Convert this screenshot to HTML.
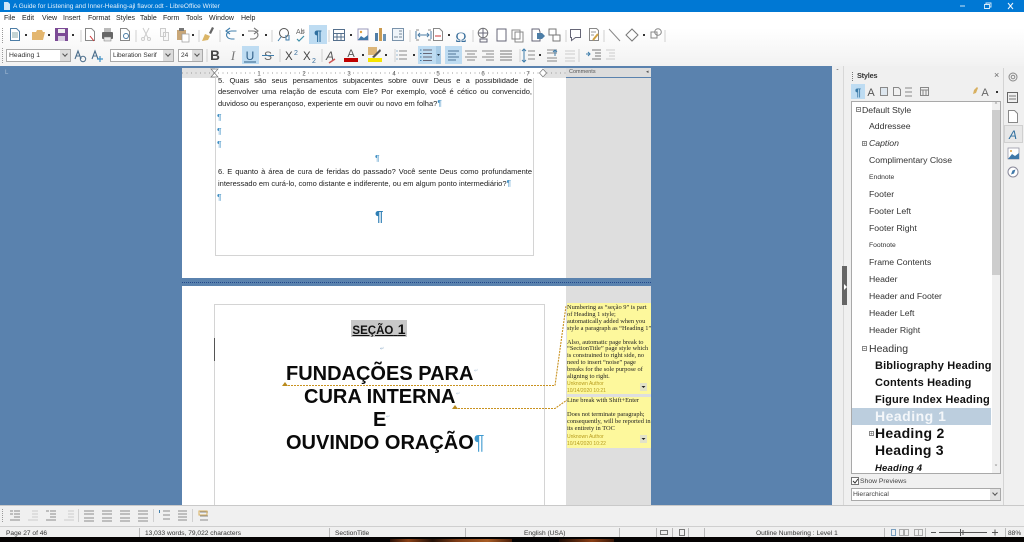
<!DOCTYPE html>
<html><head><meta charset="utf-8"><title>LibreOffice Writer</title>
<style>
html,body{margin:0;padding:0;background:#000}
#r{position:relative;width:1024px;height:542px;overflow:hidden;font-family:"Liberation Sans",sans-serif;background:#f0f0f0;color:#222}
.a{position:absolute}
.t{position:absolute;white-space:nowrap}
.m{font-size:7px;top:15px;color:#222;line-height:8px}
.j{position:absolute;left:218px;width:314px;font-size:7.5px;color:#222;text-align:justify;text-align-last:justify;white-space:nowrap;line-height:11px}
.p{position:absolute;font-size:8.6px;color:#3f8fc4;line-height:11px}
.c{position:absolute;left:567px;width:84px;font:6.4px/6.9px "Liberation Serif",serif;color:#222;white-space:nowrap}
.s{position:absolute;left:869px;font-size:8.7px;color:#333;white-space:nowrap;line-height:12px}
.b{position:absolute;left:875px;font-weight:bold;color:#111;white-space:nowrap}
.st{position:absolute;top:529px;font-size:6.6px;color:#333;white-space:nowrap;line-height:9px}
.sep{position:absolute;top:528px;width:1px;height:9px;background:#b9b9b9}
.cb{position:absolute;background:#fff;border:1px solid #a9a9a9;box-sizing:border-box;height:13px;font-size:6.5px;line-height:11px;padding-left:2px;color:#333;white-space:nowrap}
.ar{position:absolute;top:0;right:0;width:10px;height:11px;background:#dcdcdc}
.ar::after{content:"";position:absolute;left:3px;top:2px;width:3px;height:3px;border-right:1px solid #555;border-bottom:1px solid #555;transform:rotate(45deg)}
</style></head><body><div id="r">

<div class="a" style="left:0;top:0;width:1024px;height:12px;background:#0078d4"></div>
<div class="t" style="left:13px;top:2px;font-size:6.5px;color:#e4f1fb;line-height:9px">A Guide for Listening and Inner-Healing-ajl flavor.odt - LibreOffice Writer</div>
<svg class="a" style="left:0;top:0" width="1024" height="12">
<path d="M4 2h4l2 2v6H4z" fill="#cfe5f7"/>
<path d="M960 6h5" stroke="#cde4f6" stroke-width="1"/>
<path d="M984.500 4.500h5v4h-5zM986 4V3h5v4h-1" fill="none" stroke="#dbecf9" stroke-width=".9"/>
<path d="M1008 3l5 6M1013 3l-5 6" stroke="#f0f7fc" stroke-width="1"/>
</svg>

<div class="a" style="left:0;top:12px;width:1024px;height:54px;background:linear-gradient(#fff 0,#fff 30%,#f2f2f2 100%)"></div>
<div class="t m" style="left:4px">File</div>
<div class="t m" style="left:22px">Edit</div>
<div class="t m" style="left:42px">View</div>
<div class="t m" style="left:63px">Insert</div>
<div class="t m" style="left:88px">Format</div>
<div class="t m" style="left:116px">Styles</div>
<div class="t m" style="left:140px">Table</div>
<div class="t m" style="left:163px">Form</div>
<div class="t m" style="left:186px">Tools</div>
<div class="t m" style="left:209px">Window</div>
<div class="t m" style="left:241px">Help</div>

<div class="a" style="left:309px;top:25px;width:18px;height:19px;background:#bedcf2"></div>
<div class="a" style="left:242px;top:46px;width:17px;height:18px;background:#bedcf2"></div>
<div class="a" style="left:418px;top:46px;width:23px;height:18px;background:#bedcf2"></div>
<div class="a" style="left:445px;top:46px;width:17px;height:18px;background:#bedcf2"></div>
<div class="a" style="left:436px;top:46px;width:5px;height:18px;background:#a7cbe6"></div>

<!-- row 1 -->
<svg class="a" style="left:0;top:24px" width="1024" height="22" font-family="Liberation Sans">
<g fill="none" stroke="#777" stroke-width="1">
<path d="M2.500 4v15" stroke="#999" stroke-dasharray="1 1"/>
<path d="M10.500 4.500h6l3 3v9h-9z" stroke="#4c7da6" fill="#fff"/><path d="M12 9h6M12 11h6M12 13h6" stroke="#8aa"/>
<path d="M85.500 4.500h6l3 3v9h-9z" stroke="#888" fill="#fff"/><path d="M90 12l4 5" stroke="#c33"/>
<path d="M120.500 4.500h6l3 3v9h-9z" stroke="#888" fill="#fff"/><circle cx="126" cy="12" r="2.500" stroke="#4c7da6"/>
<path d="M143 4l5 10M149 4l-5 10" stroke="#ccc"/><circle cx="143" cy="15" r="1.500" stroke="#ccc"/><circle cx="149" cy="15" r="1.500" stroke="#ccc"/>
<path d="M160.500 4.500h5v8h-5zM163.500 8.500h5v8h-5z" stroke="#ccc" fill="#f8f8f8"/>
<path d="M234.500 15h-3c-3 0-5-2-5-4s2-4 5-4h5M230 4l-4 3 4 3" stroke="#3f7dab" stroke-width="1.100"/>
<path d="M250 15h3c3 0 5-2 5-4s-2-4-5-4h-5M254 4l4 3-4 3" stroke="#777" stroke-width="1.100"/>
<circle cx="284" cy="9" r="4.500" stroke="#555"/><path d="M281 13l-3 4M286 11v5h3v-5" stroke="#3f7dab"/>
<path d="M297 15l2 2 5-5" stroke="#3f8fa8" stroke-width="1.200"/>
<path d="M333.500 5.500h11v11h-11zM333.500 9.500h11M333.500 13h11M337 9.500v7M341 9.500v7" stroke="#546f8c"/>
<rect x="358" y="5" width="10" height="11" stroke="#99b" fill="#fff"/>
<rect x="392.500" y="4.500" width="11" height="12" stroke="#7a93ab" fill="#eef4f9"/><path d="M399 7h3M399 10h3M399 13h3M394 13h4" stroke="#789"/>
<path d="M416 7v8M431 7v8M418 11h11M420 9l-2 2 2 2M427 9l2 2-2 2" stroke="#4c7da6"/><path d="M416 6h3M428 6h3M416 16h3M428 16h3" stroke="#888"/>
<path d="M433.500 4.500h6l3 3v9h-9z" stroke="#888" fill="#fff"/><path d="M435 12h6" stroke="#c33"/>
<circle cx="483" cy="9" r="4.800" stroke="#777"/><path d="M478 9h10M483 4v10M480 15h7v3h-7z" stroke="#667"/>
<path d="M497 5h9v12h-9z" stroke="#667" fill="#fff"/><path d="M512 6h8v9h-8zM515 8h8v10h-8z" stroke="#888" fill="#fff"/>
<path d="M532 5h7l1 3v9h-8z" stroke="#667" fill="#fff"/><path d="M537 9h5l3 3-3 3h-5z" fill="#4c7da6" stroke="none"/>
<path d="M549 5h7v6h-7zM553 11h7v6h-7z" stroke="#777" fill="#fff"/>
<path d="M570.500 5.500h10v8h-5l-4 3v-3h-1z" stroke="#667" fill="#fff"/>
<path d="M589.500 4.500h7l2 2v10h-9z" stroke="#888" fill="#fff"/><path d="M591 8h5M591 11h3" stroke="#999"/><path d="M593 16l5-6" stroke="#d0a040" stroke-width="2"/>
<path d="M609 5l11 12" stroke="#888"/>
<path d="M632 5l6 6-6 6-6-6z" stroke="#777"/>
<path d="M651 8h6v6h-6z" stroke="#888"/><circle cx="658" cy="8" r="3.300" stroke="#888"/>
<path d="M81 6v12M136 6v12M199 6v12M220 6v12M272 6v12M329 6v12M410 6v12M473 6v12M566 6v12M604 6v12M665 6v12" stroke="#d0d0d0"/>
</g>
<path d="M55 4h13v13H55z" fill="#7b4a95"/><rect x="58" y="5" width="7" height="4" fill="#eee"/><rect x="58" y="12" width="7" height="5" fill="#d7cce0"/>
<path d="M32 8h4l1-2h5l1 2h2l-2 8H32z" fill="#e3b66f"/>
<rect x="102" y="8" width="11" height="7" fill="#666" rx="1"/><rect x="104" y="4" width="7" height="4" fill="#bbb"/><rect x="104" y="13" width="7" height="4" fill="#e6e6e6" stroke="#777" stroke-width=".5"/>
<rect x="177" y="6" width="9" height="10" fill="#c9a778"/><rect x="179" y="4" width="5" height="3" fill="#777"/><rect x="182" y="10" width="7" height="8" fill="#fff" stroke="#999" stroke-width=".7"/>
<path d="M212 3l2 1-3 6-2-1z" fill="#666"/><path d="M205 10l5 2-2 4-6 1z" fill="#dbb566"/>
<g fill="#333"><rect x="25" y="10" width="2" height="2"/><rect x="48" y="10" width="2" height="2"/><rect x="72" y="10" width="2" height="2"/><rect x="192" y="10" width="2" height="2"/><rect x="242" y="10" width="2" height="2"/><rect x="265" y="10" width="2" height="2"/><rect x="350" y="10" width="2" height="2"/><rect x="448" y="10" width="2" height="2"/><rect x="643" y="10" width="2" height="2"/></g>
<path d="M358 16l3-4 3 2 4-3v5z" fill="#3f78a8"/><circle cx="361" cy="8" r="1.200" fill="#e0a040"/>
<rect x="375" y="9" width="3" height="8" fill="#4f7da6"/><rect x="379" y="4" width="3" height="13" fill="#c99a50"/><rect x="383" y="10" width="3" height="7" fill="#6c93b5"/>
<text x="461" y="18" font-size="15" text-anchor="middle" fill="#3a6f9c" font-family="Liberation Serif">Ω</text>
<text x="296" y="10" font-size="7" fill="#666">Ab</text><text x="302" y="9" font-size="6" fill="#888">c</text>
<text x="318" y="16" font-size="14" font-weight="bold" text-anchor="middle" fill="#2f6f9f">¶</text>
</svg>

<!-- row 2 -->
<svg class="a" style="left:0;top:22px" width="1024" height="44" font-family="Liberation Sans">
<g fill="none" stroke="#777" stroke-width="1">
<path d="M2.500 26v15" stroke="#999" stroke-dasharray="1 1"/>
<path d="M207 27v13M280 27v13M322 27v13M395 27v13M520 27v13M579 27v13" stroke="#d0d0d0"/>
<path d="M75 37l3-8 3 8M76 34h4" stroke="#4b6d8b" stroke-width="1.100"/><circle cx="83" cy="37" r="2.700" stroke="#4b6d8b"/>
<path d="M92 37l3-8 3 8M93 34h4" stroke="#4b6d8b" stroke-width="1.100"/><path d="M97 37h6M100 34v6" stroke="#3f8fc4" stroke-width="1.200"/>
<g transform="translate(0,-2)">
<path d="M399 31h8M399 35h8M399 39h8" stroke="#888"/><path d="M396.500 31h1M396.500 35h1M396.500 39h1" stroke="#3f7dab"/>
<path d="M423 30h9M423 33.500h9M423 37h9M423 40.500h9" stroke="#667"/><path d="M420 30h1.500M420 33.500h1.500M420 37h1.500M420 40.500h1.500" stroke="#3f7dab"/>
<path d="M448 31h11M448 34h8M448 37h11M448 40h8" stroke="#4d7597"/>
<path d="M465 31h12M467 34h8M465 37h12M467 40h8" stroke="#888"/>
<path d="M482 31h12M486 34h8M482 37h12M486 40h8" stroke="#888"/>
<path d="M500 31h12M500 34h12M500 37h12M500 40h12" stroke="#777"/>
<path d="M524 29v13M522 31l2-2 2 2M522 40l2 2 2-2" stroke="#3f7dab"/><path d="M528 31h7M528 35h7M528 39h7" stroke="#888"/>
<path d="M547 30h10M547 33h10M547 38h10M547 41h10" stroke="#888"/><path d="M555 36v-6M553 32l2-2 2 2" stroke="#3f7dab"/>
<path d="M565 31h10M565 34h10M565 38h10M565 41h10" stroke="#ccc"/>
<path d="M592 30h9M595 33h6M595 36h6M592 39h9" stroke="#777"/><path d="M586 34h4M588 32l2 2-2 2" stroke="#3f7dab"/>
<path d="M606 30h9M609 33h6M609 36h6M606 39h9" stroke="#ccc"/>
</g>
</g>
<g fill="#333"><rect x="362" y="32" width="2" height="2"/><rect x="385" y="32" width="2" height="2"/><rect x="413" y="32" width="2" height="2"/><rect x="539" y="32" width="2" height="2"/></g>
<path d="M437 32h3l-1.500 2z" fill="#234"/>
<text x="215" y="38" font-size="13.500" font-weight="bold" text-anchor="middle" fill="#444">B</text>
<text x="233" y="38" font-size="13" text-anchor="middle" fill="#777" font-family="Liberation Serif" font-style="italic">I</text>
<text x="250" y="38" font-size="12" text-anchor="middle" fill="#2f5f88">U</text><rect x="244" y="39.500" width="12" height="1" fill="#2f5f88"/>
<text x="268" y="38" font-size="12" text-anchor="middle" fill="#666">S</text><rect x="262" y="33" width="12" height="1" fill="#3f7dab"/>
<text x="285" y="38" font-size="11.500" fill="#444">X</text><text x="294" y="33" font-size="7" fill="#3a6f9c">2</text>
<text x="303" y="38" font-size="11.500" fill="#444">X</text><text x="312" y="41" font-size="7" fill="#3a6f9c">2</text>
<text x="330" y="38" font-size="12" text-anchor="middle" fill="#555" font-style="italic">A</text><path d="M329 41l6-4" stroke="#c55" stroke-width="1.500"/>
<text x="351" y="35" font-size="11" text-anchor="middle" fill="#555">A</text><rect x="344" y="36" width="14" height="4" fill="#c00000"/>
<rect x="368" y="25" width="9" height="8" fill="#dcb67a"/><path d="M372 35l8-8 1 2-7 7z" fill="#555"/><rect x="368" y="36" width="14" height="4" fill="#f5e400"/>
</svg>

<!-- combos -->
<div class="cb" style="left:6px;top:49px;width:65px;font-size:6.8px">Heading 1<div class="ar"></div></div>
<div class="cb" style="left:110px;top:49px;width:64px">Liberation Serif<div class="ar"></div></div>
<div class="cb" style="left:178px;top:49px;width:25px">24<div class="ar"></div></div>

<!-- workspace -->
<div class="a" style="left:0;top:66px;width:843px;height:439px;background:#5a82ae"></div>
<div class="t" style="left:5px;top:70px;font-size:6px;color:#a9bfd6;line-height:7px">L</div>
<div class="a" style="left:182px;top:78px;width:384px;height:200px;background:#fff"></div>
<div class="a" style="left:566px;top:78px;width:85px;height:200px;background:#dedede"></div>
<div class="a" style="left:182px;top:286px;width:384px;height:219px;background:#fff"></div>
<div class="a" style="left:566px;top:286px;width:85px;height:219px;background:#dedede"></div>
<div class="a" style="left:182px;top:281.500px;width:469px;height:0;border-top:1px dotted #24498a"></div>
<div class="a" style="left:215px;top:78px;width:317px;height:177px;border:1px solid #d4d4d4;border-top:0"></div>
<div class="a" style="left:214px;top:304px;width:329px;height:201px;border:1px solid #d4d4d4;border-bottom:0"></div>

<!-- ruler -->
<div class="a" style="left:182px;top:68px;width:384px;height:10px;background:#fff"></div>
<div class="a" style="left:182px;top:68px;width:33px;height:10px;background:#e2e2e2"></div>
<div class="a" style="left:544px;top:68px;width:22px;height:10px;background:#e2e2e2"></div>
<div class="a" style="left:566px;top:68px;width:85px;height:9px;background:#dcdcdc"></div>
<div class="t" style="left:569px;top:68px;font-size:5.500px;color:#555;line-height:8px">Comments</div>
<div class="t" style="left:646px;top:68px;font-size:5px;color:#555;line-height:8px">◂</div>
<svg class="a" style="left:182px;top:68px" width="384" height="10" font-family="Liberation Sans">
<path d="M0 5H384" stroke="#999" stroke-width="1" stroke-dasharray="1 3.500"/>
<path d="M29 1h7l-3.500 4 3.500 4h-7l3.500-4z" fill="#fff" stroke="#777" stroke-width=".7"/>
<path d="M361 9l-3.500-4 3.500-4 3.500 4z" fill="#fff" stroke="#777" stroke-width=".7"/>
<g font-size="6" fill="#555" text-anchor="middle"><text x="77" y="7.500">1</text><text x="122" y="7.500">2</text><text x="167" y="7.500">3</text><text x="212" y="7.500">4</text><text x="256" y="7.500">5</text><text x="301" y="7.500">6</text><text x="346" y="7.500">7</text></g>
</svg>

<!-- page 1 text -->
<div class="a" style="left:182px;top:78px;width:384px;height:200px;overflow:hidden">
<div class="j" style="left:36px;top:-3.500px">5. Quais são seus pensamentos subjacentes sobre ouvir Deus e a possibilidade de</div>
</div>
<div class="j" style="top:86px">desenvolver uma relação de escuta com Ele? Por exemplo, você é cético ou convencido,</div>
<div class="t" style="left:218px;top:98px;font-size:7.5px;line-height:11px;color:#222">duvidoso ou esperançoso, experiente em ouvir ou novo em folha?<span style="color:#3f8fc4;font-size:8.6px">¶</span></div>
<div class="p" style="left:217px;top:112px">¶</div>
<div class="p" style="left:217px;top:126px">¶</div>
<div class="p" style="left:217px;top:139px">¶</div>
<div class="p" style="left:375px;top:153px">¶</div>
<div class="j" style="top:166px">6. E quanto à área de cura de feridas do passado? Você sente Deus como profundamente</div>
<div class="t" style="left:218px;top:178px;font-size:7.5px;line-height:11px;color:#222">interessado em curá-lo, como distante e indiferente, ou em algum ponto intermediário?<span style="color:#3f8fc4;font-size:8.6px">¶</span></div>
<div class="p" style="left:217px;top:192px">¶</div>
<div class="p" style="left:375px;top:207px;font-size:15px;line-height:20px;font-weight:bold;color:#2f7fb5">¶</div>

<!-- page 2 headings -->
<div class="a" style="left:351px;top:320px;width:56px;height:17px;background:#c8c8c8"></div>
<div class="t" style="left:351px;top:320px;width:56px;text-align:center;font-weight:bold;line-height:19px;color:#111;text-decoration:underline"><span style="font-size:11.500px">SEÇÃO</span> <span style="font-size:14px;line-height:17px">1</span></div>
<div class="a" style="left:214px;top:338px;width:1px;height:23px;background:#555"></div>
<div class="t" style="left:380px;top:346px;font-size:5px;color:#8aa9c6">↵</div>
<div class="t" style="left:286px;top:362px;font-weight:bold;font-size:20px;line-height:24px;color:#0a0a0a">FUNDAÇÕES PARA</div>
<div class="t" style="left:304px;top:385px;font-weight:bold;font-size:20px;line-height:24px;color:#0a0a0a">CURA INTERNA</div>
<div class="t" style="left:373px;top:408px;font-weight:bold;font-size:20px;line-height:24px;color:#0a0a0a">E</div>
<div class="t" style="left:286px;top:431px;font-weight:bold;font-size:20px;line-height:24px;color:#0a0a0a">OUVINDO ORAÇÃO<span style="color:#3f9ad0;font-weight:normal">¶</span></div>
<div class="t" style="left:474px;top:368px;font-size:5px;color:#a8bfd5">↵</div>
<div class="t" style="left:456px;top:391px;font-size:5px;color:#a8bfd5">↵</div>
<div class="t" style="left:386px;top:414px;font-size:5px;color:#a8bfd5">↵</div>

<!-- comments -->
<div class="a" style="left:567px;top:303px;width:84px;height:91px;background:#fdf89c"></div>
<div class="a" style="left:567px;top:397px;width:84px;height:51px;background:#fdf89c"></div>
<div class="c" style="top:305px">Numbering as “seção 9” is part<br>of Heading 1 style;<br>automatically added when you<br>style a paragraph as “Heading 1”<br><br>Also, automatic page break to<br>“SectionTitle” page style which<br>is constrained to right side, no<br>need to insert “noise” page<br>breaks for the sole purpose of<br>aligning to right.</div>
<div class="t" style="left:567px;top:381px;font-size:5px;line-height:6px;color:#b79c1e">Unknown Author</div>
<div class="t" style="left:567px;top:388px;font-size:5px;line-height:6px;color:#b79c1e">10/14/2020 10:21</div>
<div class="a" style="left:640px;top:383px;width:7px;height:8px;background:#e2e2c8"></div>
<div class="c" style="top:398px">Line break with Shift+Enter<br><br>Does not terminate paragraph;<br>consequently, will be reported in<br>its entirety in TOC</div>
<div class="t" style="left:567px;top:434px;font-size:5px;line-height:6px;color:#b79c1e">Unknown Author</div>
<div class="t" style="left:567px;top:441px;font-size:5px;line-height:6px;color:#b79c1e">10/14/2020 10:22</div>
<div class="a" style="left:640px;top:435px;width:7px;height:8px;background:#e2e2c8"></div>
<svg class="a" style="left:0;top:0" width="1024" height="542">
<path d="M285 385.500H555L566 306M458 408.500H555L567 400" fill="none" stroke="#c9921f" stroke-width="1.100" stroke-dasharray="2 1"/>
<path d="M285 382l3 4h-6zM455 405l3 4h-6z" fill="#b98a1c"/>
<path d="M641.500 386h4l-2 2z M641.500 438h4l-2 2z" fill="#222"/>
</svg>

<!-- v scroll / sidebar -->
<div class="a" style="left:832px;top:66px;width:11px;height:439px;background:#efefef"></div>
<div class="a" style="left:833px;top:69px;width:9px;height:8px;font-size:6px;text-align:center;color:#444;line-height:8px">ˆ</div>
<div class="a" style="left:843px;top:66px;width:181px;height:439px;background:#f0f0f0;border-left:1px solid #d8d8d8;box-sizing:border-box"></div>
<div class="a" style="left:842px;top:266px;width:5px;height:39px;background:#666"></div>
<div class="a" style="left:844px;top:284px;width:0;height:0;border-left:3px solid #fff;border-top:3px solid transparent;border-bottom:3px solid transparent"></div>
<div class="a" style="left:1003px;top:68px;width:1px;height:437px;background:#d4d4d4"></div>

<div class="t" style="left:857px;top:71px;font-size:7.300px;font-weight:bold;color:#333;line-height:10px;letter-spacing:-.2px">Styles</div>
<div class="t" style="left:994px;top:71px;font-size:9px;color:#666;line-height:9px">×</div>
<div class="a" style="left:851px;top:84px;width:14px;height:15px;background:#bedcf2"></div>
<svg class="a" style="left:850px;top:67px" width="174" height="120" font-family="Liberation Sans">
<path d="M2.500 5v10" stroke="#777" stroke-dasharray="1 1"/>
<text x="8" y="29" font-size="11" font-weight="bold" text-anchor="middle" fill="#3a7aa8">¶</text>
<text x="21" y="29" font-size="11" text-anchor="middle" fill="#555">A</text>
<g fill="none" stroke="#888">
<rect x="30.500" y="20.500" width="7" height="8" fill="#dde6ee"/><path d="M43.500 20.500h5l2 2v6h-7z"/>
<path d="M55 21h7M55 25h7M55 29h7"/><rect x="70.500" y="20.500" width="8" height="8"/><path d="M70.500 23h8M73 23v6M76 23v6"/>
<circle cx="163" cy="10" r="4" stroke="#888"/><circle cx="163" cy="10" r="1.800"/>
<rect x="157.500" y="25.500" width="10" height="10" stroke="#666"/><path d="M159 29h7M159 32h7" stroke="#777"/>
<path d="M158.500 43.500h6l3 3v9h-9z" stroke="#888" fill="#fff"/>
</g>
<path d="M124 23l3-3 1 1-2 5-3 1z" fill="#d8b060"/>
<text x="135" y="29" font-size="11" text-anchor="middle" fill="#666">A</text><rect x="146" y="24" width="2" height="2" fill="#333"/>
</svg>

<div class="a" style="left:1004px;top:125px;width:19px;height:18px;background:#e7e7e7;border:1px solid #d0d0d0;box-sizing:border-box"></div>
<svg class="a" style="left:1004px;top:125px" width="20" height="60" font-family="Liberation Sans">
<text x="9" y="14" font-size="12" text-anchor="middle" fill="#2f6f9f" font-style="italic">A</text>
<rect x="4" y="23" width="11" height="11" fill="#fff" stroke="#889" stroke-width=".7"/><path d="M4 34l4-5 3 2 4-3v6z" fill="#3f78a8"/><circle cx="7" cy="26" r="1" fill="#e0a040"/>
<circle cx="9" cy="47" r="5" fill="#fff" stroke="#889"/><path d="M11.500 44.500l-1.500 4-3 1 1.500-4z" fill="#3f78a8"/>
</svg>

<!-- list -->
<div class="a" style="left:851px;top:101px;width:150px;height:373px;background:#fff;border:1px solid #a9a9a9;box-sizing:border-box"></div>
<div class="a" style="left:992px;top:102px;width:8px;height:371px;background:#f0f0f0"></div>
<div class="a" style="left:992px;top:110px;width:8px;height:165px;background:#cdcdcd"></div>
<div class="t" style="left:992px;top:104px;width:8px;text-align:center;font-size:7px;line-height:6px;color:#444">ˆ</div>
<div class="t" style="left:992px;top:466px;width:8px;text-align:center;font-size:7px;line-height:6px;color:#444">ˇ</div>
<div class="a" style="left:852px;top:408px;width:139px;height:17px;background:#bccede"></div>

<svg class="a" style="left:0;top:0" width="1024" height="542" fill="none" stroke="#888">
<path d="M856.500 107.500h4v4h-4zM857.500 109.500h2"/>
<path d="M862.500 141.500h4v4h-4zM863.500 143.500h2M864.500 142.500v2"/>
<path d="M862.500 346.500h4v4h-4zM863.500 348.500h2"/>
<path d="M869.500 431.500h4v4h-4zM870.500 433.500h2M871.500 432.500v2"/>
</svg>

<div class="s" style="left:862px;top:104px">Default Style</div>
<div class="s" style="top:120px">Addressee</div>
<div class="s" style="top:137px;font-style:italic">Caption</div>
<div class="s" style="top:154px">Complimentary Close</div>
<div class="s" style="top:172px;font-size:6.800px">Endnote</div>
<div class="s" style="top:188px">Footer</div>
<div class="s" style="top:205px">Footer Left</div>
<div class="s" style="top:222px">Footer Right</div>
<div class="s" style="top:240px;font-size:6.800px">Footnote</div>
<div class="s" style="top:256px">Frame Contents</div>
<div class="s" style="top:273px">Header</div>
<div class="s" style="top:290px">Header and Footer</div>
<div class="s" style="top:307px">Header Left</div>
<div class="s" style="top:324px">Header Right</div>
<div class="s" style="top:343px;font-size:10.500px">Heading</div>
<div class="b" style="top:360px;font-size:11px;line-height:13px;letter-spacing:.15px">Bibliography Heading</div>
<div class="b" style="top:377px;font-size:11px;line-height:13px;letter-spacing:.15px">Contents Heading</div>
<div class="b" style="top:394px;font-size:11px;line-height:13px;letter-spacing:.15px">Figure Index Heading</div>
<div class="b" style="top:408px;font-size:14px;line-height:17px;color:#f4f7fa;letter-spacing:.5px">Heading 1</div>
<div class="b" style="top:425px;font-size:14px;line-height:17px;letter-spacing:.3px">Heading 2</div>
<div class="b" style="top:442px;font-size:14px;line-height:17px;letter-spacing:.2px">Heading 3</div>
<div class="b" style="top:462px;font-size:9.500px;line-height:13px;font-style:italic;letter-spacing:.2px">Heading 4</div>

<div class="a" style="left:851px;top:477px;width:6px;height:6px;border:1px solid #777;background:#fff"></div>
<svg class="a" style="left:851px;top:477px" width="9" height="9"><path d="M2 4l2 2 3-4" fill="none" stroke="#333"/></svg>
<div class="t" style="left:860px;top:477px;font-size:6.800px;line-height:10px;color:#444">Show Previews</div>
<div class="a" style="left:851px;top:488px;width:150px;height:13px;background:#fff;border:1px solid #a9a9a9;box-sizing:border-box;font-size:6.800px;line-height:11px;padding-left:1px;color:#444">Hierarchical<div class="ar" style="background:#e2e2e2"></div></div>

<!-- bottom toolbar -->
<div class="a" style="left:0;top:505px;width:1024px;height:1px;background:#c9c9c9"></div>
<div class="a" style="left:0;top:506px;width:1024px;height:20px;background:#f0f0f0"></div>
<div class="a" style="left:0;top:526px;width:1024px;height:1px;background:#cfcfcf"></div>
<svg class="a" style="left:0;top:506px" width="260" height="20" fill="none" stroke="#8b8b8b">
<path d="M2.500 3v13" stroke="#999" stroke-dasharray="1 1"/>
<path d="M14 5h6M14 8h6M14 11h6M10 14h10M10 5h3M10 8h3"/>
<path d="M32 5h6M32 8h6M32 11h6M28 14h10" stroke="#ccc"/>
<path d="M50 5h6M50 8h6M50 11h6M46 14h10M46 5h3"/>
<path d="M68 5h6M68 8h6M68 11h6M64 14h10" stroke="#ccc"/>
<path d="M84 5h10M84 8h10M84 12h10M84 15h10"/>
<path d="M102 5h10M102 8h10M102 12h10M102 15h10"/>
<path d="M120 5h10M120 8h10M120 12h10M120 15h10"/>
<path d="M138 5h10M138 8h10M138 12h10M138 15h10"/>
<path d="M78.500 3v13M153.500 3v13M192.500 3v13" stroke="#d0d0d0"/>
<path d="M163 5h7M163 9h7M163 13h7"/><path d="M159.500 4v3" stroke="#3f7dab"/>
<path d="M178 5h9M178 8h9M178 11h9M178 14h9"/>
<path d="M200 6h8M200 10h8M200 14h8"/><path d="M199 5h8v4h-8z" stroke="#d8b060"/>
</svg>

<!-- status bar -->
<div class="a" style="left:0;top:527px;width:1024px;height:11px;background:#f0f0f0"></div>
<div class="st" style="left:6px">Page 27 of 46</div>
<div class="st" style="left:145px">13,033 words, 79,022 characters</div>
<div class="st" style="left:335px">SectionTitle</div>
<div class="st" style="left:524px">English (USA)</div>
<div class="st" style="left:756px">Outline Numbering : Level 1</div>
<div class="st" style="left:1008px">88%</div>
<div class="sep" style="left:139px"></div><div class="sep" style="left:329px"></div><div class="sep" style="left:465px"></div><div class="sep" style="left:619px"></div><div class="sep" style="left:656px"></div><div class="sep" style="left:672px"></div><div class="sep" style="left:688px"></div><div class="sep" style="left:704px"></div><div class="sep" style="left:884px"></div><div class="sep" style="left:925px"></div><div class="sep" style="left:1005px"></div>
<svg class="a" style="left:0;top:527px" width="1024" height="11" fill="none" stroke="#777">
<rect x="660.500" y="3.500" width="7" height="4"/><rect x="679.500" y="2.500" width="5" height="6"/>
<rect x="891.500" y="2.500" width="4" height="6" stroke="#7aa0c0"/><rect x="899.500" y="2.500" width="4" height="6" stroke="#aaa"/><rect x="904.500" y="2.500" width="4" height="6" stroke="#aaa"/><rect x="914.500" y="2.500" width="4" height="6" stroke="#aaa"/><rect x="918.500" y="2.500" width="4" height="6" stroke="#aaa"/>
<path d="M931 5.500h5M939 5.500h48M992 5.500h6M995 2.500v6" stroke="#555"/><path d="M960.500 2v7M963 3v5" stroke="#555"/>
</svg>

<!-- bottom strip -->
<div class="a" style="left:0;top:537px;width:1024px;height:5px;background:#050302"></div>
<div class="a" style="left:390px;top:539px;width:122px;height:3px;background:linear-gradient(90deg,#2a1006,#8a4016 15%,#241006 35%,#7e3c16 55%,#a85c24 80%,#4a1e0a)"></div>
<div class="a" style="left:559px;top:539px;width:55px;height:3px;background:linear-gradient(90deg,#1a0a04,#8a3e14 60%,#3a1808)"></div>

</div></body></html>
